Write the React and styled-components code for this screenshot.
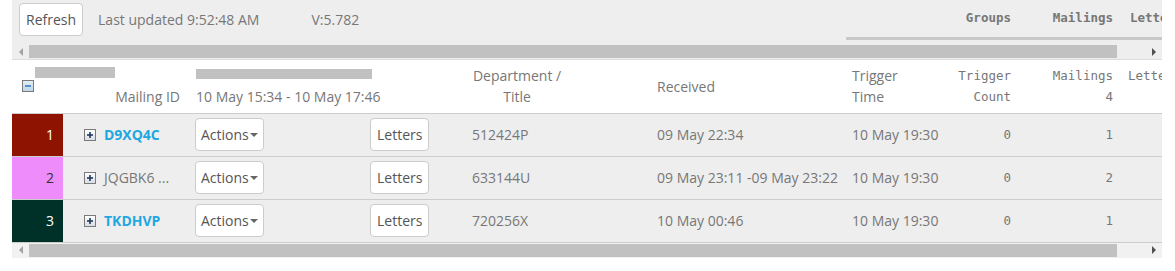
import React from 'react';
import styled, { createGlobalStyle } from 'styled-components';

const GlobalStyle = createGlobalStyle`
  body {
    margin: 0;
    background: #fff;
    font-family: "Open Sans", "Liberation Sans", sans-serif;
    font-size: 14px;
    color: #777;
  }
`;

const Page = styled.div`
  width: 1150px;
  margin-left: 12px;
  overflow: hidden;
`;

const TopArea = styled.div`
  background: #eee;
  border-bottom: 1px solid #ddd;
`;

const Toolbar = styled.div`
  display: flex;
  height: 44px;
  overflow: hidden;
`;

const ToolLeft = styled.div`
  flex: none;
  width: 834px;
  height: 36px;
  display: flex;
  align-items: center;
  padding-top: 3px;
  padding-left: 7px;
  box-sizing: border-box;
`;

const Button = styled.button`
  height: 33px;
  padding: 0 ${p => p.$pad || 6}px;
  background: #fff;
  border: 1px solid #ccc;
  border-radius: 4px;
  font-family: inherit;
  font-size: 14px;
  color: #555;
  display: inline-flex;
  align-items: center;
  cursor: pointer;
`;

const Caret = styled.span`
  display: inline-block;
  width: 0;
  height: 0;
  margin-left: 1px;
  border-left: 4px solid transparent;
  border-right: 4px solid transparent;
  border-top: 4px solid #666;
`;

const Status = styled.span`
  margin-left: ${p => p.$gap}px;
  color: #777;
  white-space: nowrap;
`;

const ToolRight = styled.div`
  flex: none;
  display: flex;
  height: 40px;
  box-sizing: border-box;
  padding-bottom: 3px;
  align-items: center;
  border-bottom: 3px solid #c8c8c8;
`;

const FrozenHead = styled.div`
  flex: none;
  width: ${p => p.$w}px;
  box-sizing: border-box;
  text-align: ${p => p.$align || 'right'};
  padding: 0 ${p => (p.$align === 'left' ? 0 : 10)}px 0 ${p => (p.$align === 'left' ? 7 : 0)}px;
  font-family: "DejaVu Sans Mono", "Liberation Mono", monospace;
  font-size: 12.5px;
  font-weight: bold;
  color: #777;
  white-space: nowrap;
`;

const ScrollBar = styled.div`
  display: flex;
  height: ${p => p.$h}px;
  background: ${p => p.$bg};
`;

const ScrollArrow = styled.div`
  flex: none;
  width: 17px;
  height: 13px;
  margin-top: 1px;
  display: flex;
  align-items: center;
  justify-content: center;

  &::before {
    content: '';
    width: 0;
    height: 0;
    border-top: 4px solid transparent;
    border-bottom: 4px solid transparent;
    ${p => (p.$dir === 'left'
      ? 'border-right: 4px solid #a3a3a3;'
      : 'border-left: 4px solid #505050;')}
  }
`;

const ScrollTrack = styled.div`
  flex: none;
  width: 1116px;
  height: 13px;
  margin-top: 1px;
  display: flex;
`;

const ScrollThumb = styled.div`
  width: 1088px;
  height: 13px;
  background: #c1c1c1;
`;

const Table = styled.table`
  border-collapse: collapse;
  table-layout: fixed;
  width: 1191px;
`;

const Col = styled.col`
  width: ${p => p.$w}px;
`;

const HeadRow = styled.tr`
  height: 53px;
  border-bottom: 1px solid #ccc;
  background: #fff;
`;

const Th = styled.th`
  padding: 0 ${p => (p.$align === 'right' ? 10 : 0)}px 0 ${p => p.$pl ?? 10}px;
  font-weight: normal;
  line-height: 21px;
  text-align: ${p => p.$align || 'left'};
  vertical-align: middle;
  white-space: nowrap;
  overflow: hidden;
  font-family: ${p => (p.$mono ? '"DejaVu Sans Mono", "Liberation Mono", monospace' : 'inherit')};
  font-size: ${p => (p.$mono ? '12.5px' : '14px')};
  color: #777;
`;

const StackTh = styled.th`
  padding: 7px 10px 0 ${p => p.$left}px;
  font-weight: normal;
  vertical-align: top;
  text-align: left;
  white-space: nowrap;
  color: #777;
`;

const Placeholder = styled.div`
  width: ${p => p.$w}px;
  height: ${p => p.$h}px;
  margin: ${p => p.$m};
  background: #c1c1c1;
`;

const IdHead = styled.div`
  display: flex;
  align-items: flex-start;
  justify-content: space-between;
  margin-top: 2px;
  padding-left: 10px;
`;

const HeadLabel = styled.div`
  margin-top: ${p => p.$top}px;
  line-height: 20px;
`;

const CenterBlock = styled.div`
  width: 90px;
  text-align: center;
`;

const Row = styled.tr`
  height: 43px;
  background: #eee;
  border-bottom: 1px solid #ccc;
`;

const Td = styled.td`
  padding: 0 ${p => (p.$align === 'right' ? '10px' : '0')} 0 ${p => p.$pl || 0}px;
  text-align: ${p => p.$align || 'left'};
  vertical-align: middle;
  white-space: nowrap;
  font-family: ${p => (p.$mono ? '"DejaVu Sans Mono", "Liberation Mono", monospace' : 'inherit')};
  font-size: ${p => (p.$mono ? '12.5px' : '14px')};
  color: #777;
`;

const ColorCell = styled.td`
  background: ${p => p.$bg};
  color: ${p => p.$fg};
  text-align: right;
  padding-right: 9px;
  font-size: 14px;
`;

const IdWrap = styled.div`
  display: flex;
  align-items: center;
  gap: 8px;
`;

const IdLink = styled.a`
  font-weight: ${p => (p.$plain ? 'normal' : 'bold')};
  color: ${p => (p.$plain ? '#777' : '#1ea7e1')};
  text-decoration: none;
  cursor: pointer;
`;

function ToggleBox({ open }) {
  const gid = open ? 'tgO' : 'tgC';
  return (
    <svg width="12" height="12" viewBox="0 0 12 12" style={{ flex: 'none', display: 'block' }}>
      <defs>
        <linearGradient id={gid} x1="0" y1="0" x2="0" y2="1">
          <stop offset="0" stopColor={open ? '#e4f0f8' : '#ffffff'} />
          <stop offset="1" stopColor={open ? '#b9d4e6' : '#d6dce4'} />
        </linearGradient>
      </defs>
      <rect x="0.5" y="0.5" width="11" height="11" fill={`url(#${gid})`} stroke="#7a7a7a" />
      <rect x="3" y="5.2" width="6" height="1.6" fill={open ? '#3a7dc0' : '#223a5e'} />
      {!open && <rect x="5.2" y="3" width="1.6" height="6" fill="#223a5e" />}
    </svg>
  );
}

function Scroller({ bg, h }) {
  return (
    <ScrollBar $bg={bg} $h={h}>
      <ScrollArrow $dir="left" />
      <ScrollTrack>
        <ScrollThumb />
      </ScrollTrack>
      <ScrollArrow $dir="right" />
    </ScrollBar>
  );
}

const rows = [
  { n: 1, bg: '#8e1300', fg: '#fff', id: 'D9XQ4C', dept: '512424P', received: '09 May 22:34', trigger: '10 May 19:30', count: '0', mailings: '1' },
  { n: 2, bg: '#ee8cfb', fg: '#333', id: 'JQGBK6 ...', plain: true, dept: '633144U', received: '09 May 23:11 -09 May 23:22', trigger: '10 May 19:30', count: '0', mailings: '2' },
  { n: 3, bg: '#003129', fg: '#fff', id: 'TKDHVP', dept: '720256X', received: '10 May 00:46', trigger: '10 May 19:30', count: '0', mailings: '1' },
];

export default function App() {
  return (
    <>
      <GlobalStyle />
      <Page>
        <TopArea>
          <Toolbar>
            <ToolLeft>
              <Button $pad={6}>Refresh</Button>
              <Status $gap={15}>Last updated 9:52:48 AM</Status>
              <Status $gap={52}>V:5.782</Status>
            </ToolLeft>
            <ToolRight>
              <FrozenHead $w={96} $align="left" />
              <FrozenHead $w={79}>Groups</FrozenHead>
              <FrozenHead $w={102}>Mailings</FrozenHead>
              <FrozenHead $w={80} $align="left">Letters</FrozenHead>
            </ToolRight>
          </Toolbar>
          <Scroller bg="#eee" h={15} />
        </TopArea>

        <Table>
          <colgroup>
            <Col $w={51} />
            <Col $w={127} />
            <Col $w={175} />
            <Col $w={97} />
            <Col $w={185} />
            <Col $w={195} />
            <Col $w={100} />
            <Col $w={79} />
            <Col $w={102} />
            <Col $w={80} />
          </colgroup>
          <thead>
            <HeadRow>
              <StackTh colSpan={2} $left={0}>
                <Placeholder $w={80} $h={11} $m="0 0 0 23px" />
                <IdHead>
                  <ToggleBox open />
                  <HeadLabel $top={7}>Mailing ID</HeadLabel>
                </IdHead>
              </StackTh>
              <StackTh colSpan={2} $left={6}>
                <Placeholder $w={176} $h={10} $m="2px 0 0 0" />
                <HeadLabel $top={8}>10 May 15:34 - 10 May 17:46</HeadLabel>
              </StackTh>
              <Th>
                <CenterBlock>Department /<br />Title</CenterBlock>
              </Th>
              <Th>Received</Th>
              <Th>Trigger<br />Time</Th>
              <Th $mono $align="right">Trigger<br />Count</Th>
              <Th $mono $align="right">Mailings<br />4</Th>
              <Th $mono $pl={5}>Letters<br />&nbsp;</Th>
            </HeadRow>
          </thead>
          <tbody>
            {rows.map(r => (
              <Row key={r.n}>
                <ColorCell $bg={r.bg} $fg={r.fg}>{r.n}</ColorCell>
                <Td $pl={21}>
                  <IdWrap>
                    <ToggleBox />
                    <IdLink $plain={r.plain}>{r.id}</IdLink>
                  </IdWrap>
                </Td>
                <Td $pl={5}>
                  <Button $pad={5}>Actions<Caret /></Button>
                </Td>
                <Td $pl={5}>
                  <Button $pad={6}>Letters</Button>
                </Td>
                <Td $pl={10}>{r.dept}</Td>
                <Td $pl={10}>{r.received}</Td>
                <Td $pl={10}>{r.trigger}</Td>
                <Td $mono $align="right">{r.count}</Td>
                <Td $mono $align="right">{r.mailings}</Td>
                <Td $mono $pl={5}></Td>
              </Row>
            ))}
          </tbody>
        </Table>
        <Scroller bg="#f1f1f1" h={15} />
      </Page>
    </>
  );
}
